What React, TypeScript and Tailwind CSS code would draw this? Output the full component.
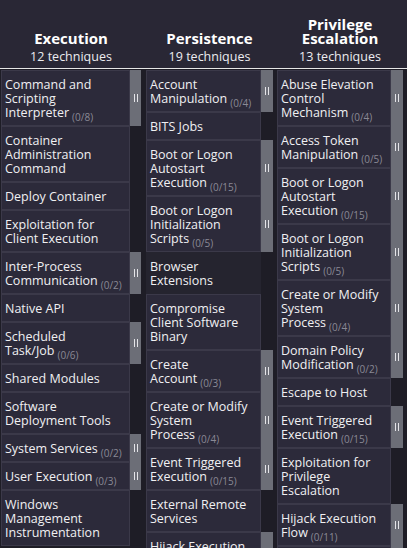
import React from "react";

type Tech = { l: string[]; s?: string; dim?: boolean };
type Col = {
  title: string[];
  count: string;
  colW: string;
  cellW: string;
  sideW: string;
  items: Tech[];
};

const cols: Col[] = [
  {
    title: ["Execution"],
    count: "12 techniques",
    colW: "w-[140px]",
    cellW: "w-[129px]",
    sideW: "w-[11px]",
    items: [
      { l: ["Command and", "Scripting", "Interpreter"], s: "0/8" },
      { l: ["Container", "Administration", "Command"] },
      { l: ["Deploy Container"] },
      { l: ["Exploitation for", "Client Execution"] },
      { l: ["Inter-Process", "Communication"], s: "0/2" },
      { l: ["Native API"] },
      { l: ["Scheduled", "Task/Job"], s: "0/6" },
      { l: ["Shared Modules"] },
      { l: ["Software", "Deployment Tools"] },
      { l: ["System Services"], s: "0/2" },
      { l: ["User Execution"], s: "0/3" },
      { l: ["Windows", "Management", "Instrumentation"] },
    ],
  },
  {
    title: ["Persistence"],
    count: "19 techniques",
    colW: "w-[127px]",
    cellW: "w-[115px]",
    sideW: "w-[12px]",
    items: [
      { l: ["Account", "Manipulation"], s: "0/4" },
      { l: ["BITS Jobs"] },
      { l: ["Boot or Logon", "Autostart", "Execution"], s: "0/15" },
      { l: ["Boot or Logon", "Initialization", "Scripts"], s: "0/5" },
      { l: ["Browser", "Extensions"], dim: true },
      { l: ["Compromise", "Client Software", "Binary"] },
      { l: ["Create", "Account"], s: "0/3" },
      { l: ["Create or Modify", "System", "Process"], s: "0/4" },
      { l: ["Event Triggered", "Execution"], s: "0/15" },
      { l: ["External Remote", "Services"] },
      { l: ["Hijack Execution", "Flow"], s: "0/11" },
    ],
  },
  {
    title: ["Privilege", "Escalation"],
    count: "13 techniques",
    colW: "w-[126px]",
    cellW: "w-[114px]",
    sideW: "w-[12px]",
    items: [
      { l: ["Abuse Elevation", "Control", "Mechanism"], s: "0/4" },
      { l: ["Access Token", "Manipulation"], s: "0/5" },
      { l: ["Boot or Logon", "Autostart", "Execution"], s: "0/15" },
      { l: ["Boot or Logon", "Initialization", "Scripts"], s: "0/5" },
      { l: ["Create or Modify", "System", "Process"], s: "0/4" },
      { l: ["Domain Policy", "Modification"], s: "0/2" },
      { l: ["Escape to Host"] },
      { l: ["Event Triggered", "Execution"], s: "0/15" },
      { l: ["Exploitation for", "Privilege", "Escalation"] },
      { l: ["Hijack Execution", "Flow"], s: "0/11" },
      { l: ["Process Injection"], s: "0/12" },
    ],
  },
];

function Cell({ t, c }: { t: Tech; c: Col }) {
  return (
    <div className="flex shrink-0">
      <div
        className={`${c.cellW} shrink-0 border px-[3px] pt-[7px] pb-[5px] ${
          t.dim ? "bg-[#25242f] border-[#25242f]" : "bg-[#2c2a3a] border-[#3b3949]"
        }`}
      >
        {t.l.map((line, i) => (
          <div key={i} className="whitespace-nowrap text-[12.5px] leading-[14px] text-[#f0f0f2]">
            {line}
            {t.s && i === t.l.length - 1 ? (
              <span className="ml-[3px] text-[10px] leading-[0] align-[-4px] text-[#8a8995]">
                ({t.s})
              </span>
            ) : null}
          </div>
        ))}
      </div>
      {t.s ? (
        <div className={`${c.sideW} shrink-0 bg-[#6c6e77] flex items-center justify-center gap-[2px]`}>
          <span className="w-px h-[8px] bg-[#e4e4e8]" />
          <span className="w-px h-[8px] bg-[#e4e4e8]" />
        </div>
      ) : (
        <div className={`${c.sideW} shrink-0`} />
      )}
    </div>
  );
}

export default function App() {
  return (
    <div className="w-[407px] h-[548px] overflow-hidden bg-[#1e1d26] font-['Open_Sans',sans-serif]">
      <div className="h-[69px] bg-[#292735] border-b border-[#e6e6e6] flex pl-[1px] gap-[5px]">
        {cols.map((c, i) => (
          <div
            key={i}
            className={`${c.colW} ${i === 2 ? "ml-[-1px]" : ""} shrink-0 flex flex-col items-center justify-end pb-[3px]`}
          >
            {c.title.map((t, j) => (
              <div key={j} className="text-[15px] leading-[14px] font-bold text-white">
                {t}
              </div>
            ))}
            <div className="mt-[4px] text-[12.5px] leading-[16px] text-[#ececf0]">{c.count}</div>
          </div>
        ))}
      </div>
      <div className="flex pl-[1px] pt-[1px] gap-[5px]">
        {cols.map((c, i) => (
          <div key={i} className={`${c.colW} ${i === 2 ? "ml-[-1px]" : ""} shrink-0 flex flex-col`}>
            {c.items.map((t, j) => (
              <Cell key={j} t={t} c={c} />
            ))}
          </div>
        ))}
      </div>
    </div>
  );
}
